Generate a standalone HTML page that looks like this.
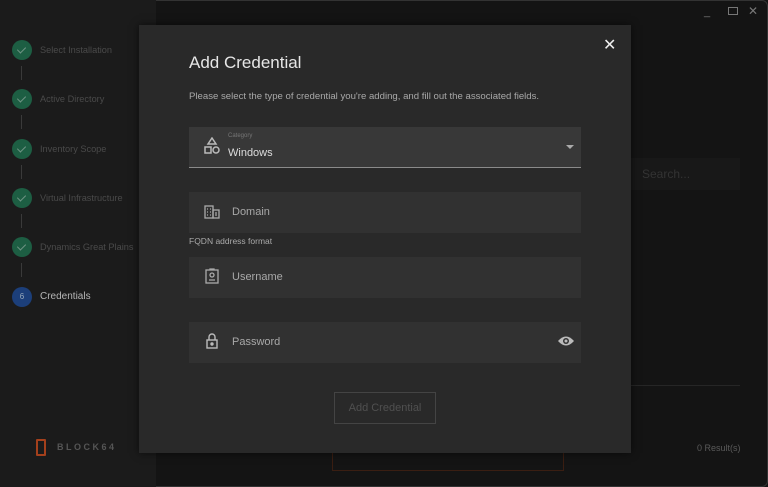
<!DOCTYPE html>
<html><head><style>
*{margin:0;padding:0;box-sizing:border-box}
body{width:768px;height:487px;background:#141414;font-family:"Liberation Sans",sans-serif;position:relative;overflow:hidden}
.a{position:absolute}
.side{left:0;top:0;width:156px;height:487px;background:#1b1b1b}
.step{left:12px;width:20px;height:20px;border-radius:50%;background:#1d5e43}
.step:after{content:"";position:absolute;left:7px;top:5px;width:4px;height:7px;border:solid #6f9484;border-width:0 1.5px 1.5px 0;transform:rotate(45deg)}
.lbl{left:40px;font-size:9.2px;color:#4a4a4a}
.line{left:21px;width:1px;height:14px;background:#3a3a3a}
.modal{left:139px;top:25px;width:492px;height:428px;background:#292929;box-shadow:0 0 8px rgba(0,0,0,.6)}
.f{left:189px;width:392px;height:41px;background:#313131}
.ft{left:232px;font-size:11px;color:#a8a8a8}
</style></head><body>
<div class="a" style="left:0;top:0;width:768px;height:487px;border:1px solid #333;border-radius:6px"></div>
<div class="a side"></div>
<div class="a step" style="top:40px"></div><div class="a lbl" style="top:45px">Select Installation</div>
<div class="a line" style="top:66px"></div>
<div class="a step" style="top:89px"></div><div class="a lbl" style="top:94px">Active Directory</div>
<div class="a line" style="top:115px"></div>
<div class="a step" style="top:139px"></div><div class="a lbl" style="top:144px">Inventory Scope</div>
<div class="a line" style="top:165px"></div>
<div class="a step" style="top:188px"></div><div class="a lbl" style="top:193px">Virtual Infrastructure</div>
<div class="a line" style="top:214px"></div>
<div class="a step" style="top:237px"></div><div class="a lbl" style="top:242px">Dynamics Great Plains</div>
<div class="a line" style="top:263px"></div>
<div class="a" style="left:12px;top:287px;width:20px;height:20px;border-radius:50%;background:#1c3f7a;color:#9ab;font-size:8px;text-align:center;line-height:20px">6</div>
<div class="a" style="left:40px;top:291px;font-size:10px;color:#b5b5b5">Credentials</div>
<div class="a" style="left:36px;top:439px;width:10px;height:17px;border:2px solid #a4401c;border-radius:1px"></div>
<div class="a" style="left:57px;top:442px;font-size:9px;letter-spacing:2.5px;color:#555;font-weight:bold">BLOCK64</div>
<div class="a" style="left:704px;top:6px;color:#777;font-size:11px">_</div>
<div class="a" style="left:728px;top:7px;width:10px;height:8px;border:1.5px solid #777"></div>
<div class="a" style="left:748px;top:4px;color:#777;font-size:12px">✕</div>
<div class="a" style="left:620px;top:158px;width:120px;height:32px;background:#181818"></div>
<div class="a" style="left:642px;top:167px;color:#333;font-size:12px">Search...</div>
<div class="a" style="left:620px;top:385px;width:120px;height:1px;background:#262626"></div>
<div class="a" style="left:697px;top:443px;color:#5a5a5a;font-size:9px">0 Result(s)</div>
<div class="a" style="left:332px;top:453px;width:232px;height:18px;border:1px solid #3a1e12;border-top:none"></div>
<div class="a modal"></div>
<div class="a" style="left:603px;top:35px;color:#eee;font-size:16px">✕</div>
<div class="a" style="left:189px;top:53px;color:#e6e6e6;font-size:17px">Add Credential</div>
<div class="a" style="left:189px;top:91px;color:#a8a8a8;font-size:9.6px">Please select the type of credential you're adding, and fill out the associated fields.</div>
<div class="a f" style="top:127px;background:#383838;border-bottom:1px solid #8a8a8a"></div>
<svg class="a" style="left:203px;top:137px" width="18" height="18" viewBox="0 0 18 18" fill="none" stroke="#bbb" stroke-width="1.5"><path d="M9 1 L13 7 H5 Z"/><rect x="2" y="10" width="6" height="6"/><circle cx="13" cy="13" r="3"/></svg>
<div class="a" style="left:228px;top:133px;color:#777;font-size:6px">Category</div>
<div class="a" style="left:228px;top:147px;color:#ddd;font-size:11px">Windows</div>
<div class="a" style="left:566px;top:145px;width:0;height:0;border:4px solid transparent;border-top:4px solid #aaa"></div>
<div class="a f" style="top:192px"></div>
<svg class="a" style="left:204px;top:205px" width="16" height="14" viewBox="0 0 16 14" fill="none" stroke="#aaa" stroke-width="1.3"><rect x="1" y="1" width="8" height="12"/><rect x="9" y="5" width="6" height="8"/><path d="M3 4h1M6 4h1M3 7h1M6 7h1M3 10h1M6 10h1M11 8h2M11 10h2"/></svg>
<div class="a ft" style="top:206px">Domain</div>
<div class="a" style="left:189px;top:236px;color:#aaa;font-size:8.5px">FQDN address format</div>
<div class="a f" style="top:257px"></div>
<svg class="a" style="left:205px;top:268px" width="14" height="16" viewBox="0 0 14 16" fill="none" stroke="#aaa" stroke-width="1.3"><rect x="1" y="2" width="12" height="13"/><circle cx="7" cy="7" r="2"/><path d="M4 12h6M5 2v-1h4v1"/></svg>
<div class="a ft" style="top:271px">Username</div>
<div class="a f" style="top:322px"></div>
<svg class="a" style="left:206px;top:333px" width="12" height="16" viewBox="0 0 12 16" fill="none" stroke="#bbb" stroke-width="1.4"><path d="M3 7V4a3 3 0 0 1 6 0v3"/><rect x="1" y="7" width="10" height="8"/><circle cx="6" cy="11" r="1" fill="#bbb"/></svg>
<div class="a ft" style="top:336px">Password</div>
<svg class="a" style="left:557px;top:335px" width="18" height="12" viewBox="0 0 18 12"><path d="M1 6 Q9 -3 17 6 Q9 15 1 6Z" fill="#bbb"/><circle cx="9" cy="6" r="3" fill="#313131"/><circle cx="9" cy="6" r="1.5" fill="#bbb"/></svg>
<div class="a" style="left:334px;top:392px;width:102px;height:32px;border:1px solid #444;color:#505050;font-size:11px;text-align:center;line-height:30px">Add Credential</div>
</body></html>
